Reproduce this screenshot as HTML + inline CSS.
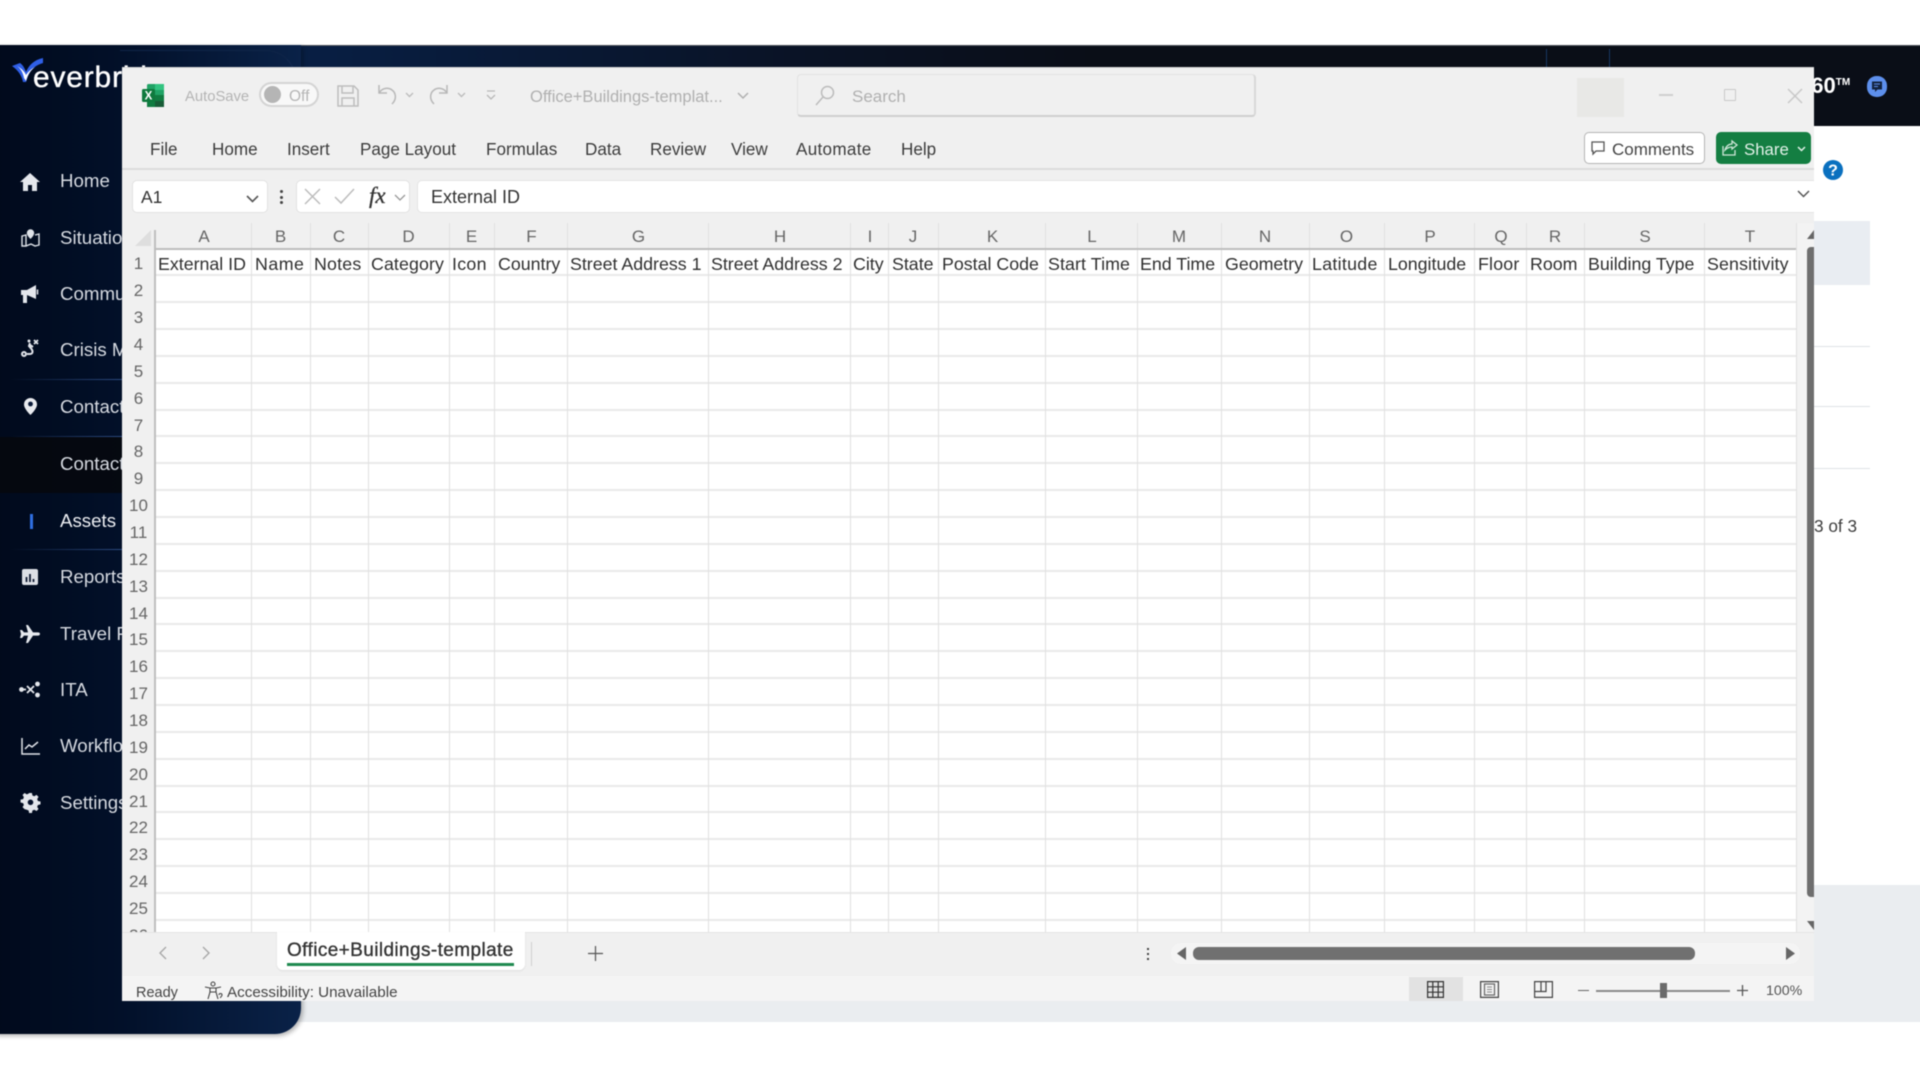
<!DOCTYPE html>
<html lang="en"><head><meta charset="utf-8"><title>Excel over Everbridge</title>
<style>
html,body{margin:0;padding:0;width:1920px;height:1080px;overflow:hidden;background:#fff}
#root{position:absolute;left:0;top:0;width:1920px;height:1080px;overflow:visible;font-family:"Liberation Sans",sans-serif;filter:blur(.45px)}
.a{position:absolute}
.t{position:absolute;white-space:nowrap;line-height:20px;height:20px}
.side{color:#d6dae1;font-size:18.7px;left:60px}
.tab{color:#3c3c3c;font-size:17.1px;top:139.5px}
.cell{color:#2f2f2f;font-size:17.8px;top:254px}
.col{position:absolute;top:226px;height:22px;line-height:22px;text-align:center;color:#666;font-size:17px}
.vl{position:absolute;top:223px;height:709px;width:1px;background:#e0e0e0}
#rows{position:absolute;left:122px;top:249.4px;width:1675px;height:682.6px;overflow:hidden}
.r{height:26.86px;box-sizing:border-box;border-bottom:2px solid #e9e9e9;width:1675px;background:#fff}
.r b{display:block;width:33px;background:#f0f0f0;height:26.86px;text-align:center;font-weight:400;color:#666;font-size:17px;line-height:29px}
svg{position:absolute;overflow:visible}
</style></head><body><div id="root">

<!-- background app -->
<div class="a" style="left:-6px;top:45px;width:1932px;height:81px;background:linear-gradient(90deg,#010a1c 0,#081f44 306px,#0a1428 766px,#0a0e17 1106px,#0a0e17 100%);border-top:1px solid #4a4f58;box-sizing:border-box"></div>
<div class="a" style="left:1546px;top:49px;width:1px;height:18px;background:#173763"></div>
<div class="a" style="left:1609px;top:49px;width:1px;height:18px;background:#173763"></div>
<div class="a" style="left:0;top:1001px;width:1926px;height:21px;background:#eaedf0"></div>
<div class="a" style="left:1814px;top:885px;width:112px;height:137px;background:#eaedf0"></div>
<div class="a" style="left:1814px;top:221px;width:56px;height:64px;background:#e9edf2"></div>
<div class="a" style="left:1814px;top:346px;width:56px;height:1px;background:#dfe2e6"></div>
<div class="a" style="left:1814px;top:406px;width:56px;height:1px;background:#dfe2e6"></div>
<div class="a" style="left:1814px;top:468px;width:56px;height:1px;background:#dfe2e6"></div>
<div class="t" style="left:1814px;top:516px;color:#3d3d3d;font-size:17.2px">3 of 3</div>
<div class="t" style="left:1799px;top:76px;color:#fff;font-weight:700;font-size:22px">360<sup style="font-size:10px;vertical-align:8px;line-height:0">TM</sup></div>
<svg style="left:1867px;top:76px" width="20" height="22" viewBox="0 0 20 22"><rect x="0" y="0" width="20" height="21" rx="9.5" fill="#5d8fec"/><path d="M5 5.5h10v8H10.5L8 16v-2.500H5z" fill="#13233f"/><path d="M7 8h6M7 10.500h4" stroke="#5d8fec" stroke-width="1"/></svg>
<svg style="left:1823px;top:160px" width="20" height="20" viewBox="0 0 20 20"><circle cx="10" cy="10" r="10" fill="#0a70bf"/><text x="10" y="15.500" text-anchor="middle" font-family="Liberation Sans" font-weight="700" font-size="16" fill="#fff">?</text></svg>

<!-- sidebar -->
<div class="a" style="left:-6px;top:45px;width:307px;height:989px;background:linear-gradient(90deg,#010a1c 0,#021029 126px,#0a2248 100%);border-bottom-right-radius:26px;box-shadow:2px 2px 5px rgba(0,0,0,.3)"></div>
<div class="a" style="left:120px;top:50px;width:175px;height:90px;border-top-right-radius:30px;border-right:1px solid #12294f;border-top:1px solid #0f2548"></div>
<div class="a" style="left:-6px;top:437px;width:307px;height:56px;background:linear-gradient(90deg,#05080f,#060a13)"></div>
<div class="a" style="left:10px;top:379px;width:112px;height:1px;background:linear-gradient(90deg,transparent,#2c4a80)"></div>
<div class="a" style="left:10px;top:436px;width:112px;height:1px;background:linear-gradient(90deg,transparent,#2c4a80)"></div>
<div class="a" style="left:10px;top:549px;width:112px;height:1px;background:linear-gradient(90deg,transparent,#2c4a80)"></div>
<div class="a" style="left:30px;top:514px;width:3px;height:15px;background:#2f6fe0"></div>

<svg style="left:12px;top:58px" width="32" height="24" viewBox="0 0 32 24"><path d="M0 8l8-3c3 2 5 6 6 9 3-7 8-12 17-14v5c-7 2-12 6-15 13l-2 6h-3C10 18 6 12 0 8z" fill="#2f5fe6"/><path d="M5 8c3 2 6 6 7 12l2 3c2-7 5-11 9-14-4 2-7 5-9 8-1-3-5-7-9-9z" fill="#fff"/></svg>
<div class="t" style="left:33px;top:60px;height:36px;line-height:36px;color:#fff;font-size:30px;letter-spacing:.8px;-webkit-text-stroke:.35px #fff">everbridge</div>

<svg style="left:20px;top:172px" width="20" height="20" viewBox="0 0 20 20"><path d="M10 1L0 10h3v9h5v-6h4v6h5v-9h3z" fill="#e4e7ec"/></svg>
<svg style="left:21px;top:229px" width="19" height="18" viewBox="0 0 19 18" fill="none" stroke="#dfe3e9" stroke-width="1.400"><path d="M1 7l4-1v11l-4 0zM5 17l5-2 4 2 4-1V5l-4 1M1 17"/><path d="M9.500 1a3 3 0 0 1 3 3c0 2-3 5-3 5s-3-3-3-5a3 3 0 0 1 3-3z" fill="#dfe3e9"/></svg>
<svg style="left:21px;top:285px" width="18" height="19" viewBox="0 0 18 19"><path d="M0 5h6L15 0v14L6 10v8H2v-8H0z" fill="#e4e7ec"/><path d="M16.500 4.500v5" stroke="#e4e7ec" stroke-width="1.500"/></svg>
<svg style="left:21px;top:339px" width="18" height="19" viewBox="0 0 18 19" fill="none" stroke="#e1e4ea" stroke-width="2"><circle cx="3" cy="15" r="2"/><path d="M6 15h3c3 0 3-3 1.500-5L8 7l1-3"/><circle cx="8" cy="2" r="1.500" fill="#e1e4ea" stroke="none"/><path d="M9 6l3 2"/><path d="M13 1l4 4M17 1l-4 4" stroke-width="1.800"/></svg>
<svg style="left:24px;top:398px" width="13" height="17" viewBox="0 0 13 17"><path d="M6.500 0a6.500 6.500 0 0 1 6.500 6.500C13 11 6.500 17 6.500 17S0 11 0 6.500A6.500 6.500 0 0 1 6.500 0z" fill="#e9ebef"/><circle cx="6.500" cy="6" r="2.400" fill="#0a1a38"/></svg>
<svg style="left:22px;top:569px" width="16" height="16" viewBox="0 0 16 16"><rect width="16" height="16" rx="2" fill="#dcdfe5"/><path d="M4.500 8v5M8 5v8M11.500 10v3" stroke="#06122a" stroke-width="1.700"/></svg>
<svg style="left:20px;top:625px" width="20" height="18" viewBox="0 0 20 18"><path d="M20 9c0-1-1-1.600-2-1.600h-5L8 0H6l2 7.400H4L2 5H0l1 4-1 4h2l2-2.400h4L6 18h2l5-7.400h5c1 0 2-.6 2-1.600z" fill="#e6e9ee"/></svg>
<svg style="left:20px;top:682px" width="20" height="15" viewBox="0 0 20 15" fill="none" stroke="#e4e7ec" stroke-width="1.800"><path d="M7 4l7 7M7 11l7-7M1 7.500h5"/><circle cx="1.500" cy="7.500" r="1.500" fill="#e4e7ec"/><circle cx="17.500" cy="2" r="1.500" fill="#e4e7ec"/><circle cx="17.500" cy="13" r="1.500" fill="#e4e7ec"/></svg>
<svg style="left:21px;top:738px" width="19" height="17" viewBox="0 0 19 17" fill="none" stroke="#dfe2e8" stroke-width="1.500"><path d="M1 0v16h18"/><path d="M4 11l4-4 3 2 6-5"/></svg>
<svg style="left:21px;top:793px" width="19" height="19" viewBox="0 0 19 19"><path d="M8 0h3l.5 2.600 2 .8L15.800 2l2.100 2.100-1.400 2.300.8 2 2.700.6v3l-2.700.6-.8 2 1.400 2.300-2.100 2.100-2.300-1.400-2 .8-.5 2.600H8l-.5-2.600-2-.8L3.200 17l-2.100-2.100 1.400-2.300-.8-2L-1 10V7l2.700-.6.800-2L1.100 2.100 3.200 0l2.300 1.400 2-.8z" fill="#e4e7ec" transform="translate(.5 0) scale(.95)"/><circle cx="9.500" cy="9.300" r="2.800" fill="#06122a"/></svg>

<div class="t side" style="top:171px">Home</div>
<div class="t side" style="top:228px">Situation Manager</div>
<div class="t side" style="top:284px">Communications</div>
<div class="t side" style="top:339.500px">Crisis Management</div>
<div class="t side" style="top:397px">Contacts</div>
<div class="t side" style="top:454px">Contacts</div>
<div class="t side" style="top:510.500px;color:#eceef2">Assets</div>
<div class="t side" style="top:567px">Reports</div>
<div class="t side" style="top:624px">Travel Risk</div>
<div class="t side" style="top:680px">ITA</div>
<div class="t side" style="top:736px">Workflows</div>
<div class="t side" style="top:792.500px">Settings</div>

<!-- Excel window -->
<div class="a" style="left:122px;top:67px;width:1692px;height:934px;background:#f0f0f0;overflow:hidden">
<div class="a" style="left:0;top:0;width:1692px;height:1px;background:#d8d8d8"></div>
</div>

<!-- Excel logo -->
<svg style="left:142px;top:84px" width="22" height="23" viewBox="0 0 22 23"><rect x="5" y="0" width="17" height="23" rx="1.500" fill="#21a366"/><rect x="13" y="0" width="9" height="6" fill="#33c481"/><rect x="5" y="11" width="17" height="6" fill="#107c41"/><rect x="13" y="17" width="9" height="6" fill="#185c37"/><rect x="5" y="17" width="8" height="6" fill="#107c41"/><rect x="0" y="5" width="13" height="13" rx="1.500" fill="#0f7a3e"/><text x="6.500" y="15.500" text-anchor="middle" font-family="Liberation Sans" font-weight="700" font-size="11.500" fill="#fff">X</text></svg>
<div class="t" style="left:185px;top:86.500px;color:#b4b4b4;font-size:14.8px">AutoSave</div>
<div class="a" style="left:259px;top:82px;width:60px;height:25px;box-sizing:border-box;border:2px solid #d4d4d4;border-radius:13px;background:#f8f8f8"></div>
<div class="a" style="left:264px;top:86px;width:17px;height:17px;border-radius:50%;background:#b5b5b5"></div>
<div class="t" style="left:289px;top:87px;color:#b5b5b5;font-size:15.5px">Off</div>
<svg style="left:337px;top:85px" width="22" height="22" viewBox="0 0 22 22" fill="none" stroke="#bdbdbd" stroke-width="1.500"><path d="M1 1h16l4 4v16H1z"/><path d="M5 1v7h11V1M5 21v-8h12v8"/></svg>
<svg style="left:377px;top:84px" width="21" height="22" viewBox="0 0 21 22" fill="none" stroke="#b8b8b8" stroke-width="1.500"><path d="M2 1v8h8"/><path d="M2 9c3-5 9-6 13-3s5 9 0 14"/></svg>
<svg style="left:405px;top:92px" width="9" height="6" viewBox="0 0 9 6" fill="none" stroke="#bdbdbd" stroke-width="1.400"><path d="M1 1l3.500 3.500L8 1"/></svg>
<svg style="left:428px;top:84px" width="21" height="22" viewBox="0 0 21 22" fill="none" stroke="#b8b8b8" stroke-width="1.500"><path d="M19 1v8h-8"/><path d="M19 9c-3-5-9-6-13-3s-5 9 0 14"/></svg>
<svg style="left:457px;top:92px" width="9" height="6" viewBox="0 0 9 6" fill="none" stroke="#bdbdbd" stroke-width="1.400"><path d="M1 1l3.500 3.500L8 1"/></svg>
<svg style="left:486px;top:90px" width="10" height="12" viewBox="0 0 10 12" fill="none" stroke="#b8b8b8" stroke-width="1.300"><path d="M1 1h8M1 5l4 4 4-4"/></svg>
<div class="t" style="left:530px;top:86.500px;color:#b0b0b0;font-size:16.5px">Office+Buildings-templat...</div>
<svg style="left:737px;top:92px" width="12" height="7" viewBox="0 0 12 7" fill="none" stroke="#b0b0b0" stroke-width="1.500"><path d="M1 1l5 5 5-5"/></svg>
<div class="a" style="left:797px;top:74px;width:459px;height:43px;box-sizing:border-box;background:#f0f0f0;border:1px solid #e2e2e2;border-bottom:2px solid #cfcfcf;border-right:2px solid #d8d8d8;border-radius:4px"></div>
<svg style="left:815px;top:85px" width="20" height="21" viewBox="0 0 20 21" fill="none" stroke="#bcbcbc" stroke-width="1.500"><circle cx="12.500" cy="7.500" r="6"/><path d="M8 12L1 20"/></svg>
<div class="t" style="left:852px;top:87px;color:#b0b0b0;font-size:17px">Search</div>
<div class="a" style="left:1577px;top:78px;width:47px;height:39px;background:#e8e8e6"></div>
<div class="a" style="left:1659px;top:94px;width:14px;height:1.500px;background:#cfcfcf"></div>
<div class="a" style="left:1724px;top:89px;width:12px;height:12px;box-sizing:border-box;border:1.500px solid #c8c8c8;border-radius:1px"></div>
<svg style="left:1788px;top:89px" width="14" height="14" viewBox="0 0 14 14" stroke="#c8c8c8" stroke-width="1.500"><path d="M0 0l14 14M14 0L0 14"/></svg>

<!-- ribbon tabs -->
<div class="t tab" style="left:150px">File</div>
<div class="t tab" style="left:212px">Home</div>
<div class="t tab" style="left:287px">Insert</div>
<div class="t tab" style="left:360px">Page Layout</div>
<div class="t tab" style="left:486px">Formulas</div>
<div class="t tab" style="left:585px">Data</div>
<div class="t tab" style="left:650px">Review</div>
<div class="t tab" style="left:731px">View</div>
<div class="t tab" style="left:796px;letter-spacing:.3px">Automate</div>
<div class="t tab" style="left:901px">Help</div>
<div class="a" style="left:1584px;top:132px;width:121px;height:32px;box-sizing:border-box;background:#fff;border:1.500px solid #b4b4b4;border-radius:5px"></div>
<svg style="left:1591px;top:141px" width="14" height="15" viewBox="0 0 14 15" fill="none" stroke="#555" stroke-width="1.300"><path d="M1 1h12v9H5l-3 3v-3H1z"/></svg>
<div class="t" style="left:1612px;top:139.500px;color:#444;font-size:17px">Comments</div>
<div class="a" style="left:1716px;top:132px;width:95px;height:32px;background:#147e42;border-radius:5px"></div>
<svg style="left:1722px;top:139px" width="16" height="17" viewBox="0 0 16 17" fill="none" stroke="#cfe6d8" stroke-width="1.300"><path d="M1 7v9h12V11M3 11c1-4 4-6 7-6V2l5 4-5 4V8c-3 0-5 1-7 3z"/></svg>
<div class="t" style="left:1744px;top:139.500px;color:#e2f1e8;font-size:16.8px">Share</div>
<svg style="left:1797px;top:146px" width="9" height="6" viewBox="0 0 9 6" fill="none" stroke="#e2f1e8" stroke-width="1.500"><path d="M1 1l3.500 3.500L8 1"/></svg>
<div class="a" style="left:122px;top:168px;width:1692px;height:2px;background:#dcdcdc"></div>

<!-- formula bar -->
<div class="a" style="left:132px;top:180px;width:136px;height:33px;box-sizing:border-box;background:#fff;border:1px solid #e2e2e2;border-radius:5px"></div>
<div class="t" style="left:141px;top:187px;color:#333;font-size:17.5px">A1</div>
<svg style="left:246px;top:195px" width="13" height="8" viewBox="0 0 13 8" fill="none" stroke="#555" stroke-width="1.600"><path d="M1 1l5.500 5.500L12 1"/></svg>
<div class="a" style="left:280px;top:190px;width:3px;height:3px;border-radius:50%;background:#444"></div>
<div class="a" style="left:280px;top:195.500px;width:3px;height:3px;border-radius:50%;background:#444"></div>
<div class="a" style="left:280px;top:201px;width:3px;height:3px;border-radius:50%;background:#444"></div>
<div class="a" style="left:296px;top:180px;width:114px;height:33px;box-sizing:border-box;background:#fff;border:1px solid #e2e2e2;border-radius:5px"></div>
<svg style="left:305px;top:189px" width="15" height="15" viewBox="0 0 15 15" stroke="#bdbdbd" stroke-width="1.500"><path d="M0 0l15 15M15 0L0 15"/></svg>
<svg style="left:334px;top:189px" width="21" height="15" viewBox="0 0 21 15" fill="none" stroke="#bdbdbd" stroke-width="1.500"><path d="M1 8l6 6L20 0"/></svg>
<div class="t" style="left:369px;top:186px;color:#333;font-family:'Liberation Serif',serif;font-style:italic;font-size:23px;-webkit-text-stroke:.3px #333">fx</div>
<svg style="left:394px;top:194px" width="12" height="7" viewBox="0 0 12 7" fill="none" stroke="#999" stroke-width="1.300"><path d="M1 1l5 5 5-5"/></svg>
<div class="a" style="left:417px;top:180px;width:1397px;height:33px;box-sizing:border-box;background:#fff;border:1px solid #e4e4e4;border-right:0;border-radius:5px 0 0 5px"></div>
<div class="t" style="left:431px;top:187px;color:#333;font-size:18px">External ID</div>
<svg style="left:1797px;top:190px" width="13" height="8" viewBox="0 0 13 8" fill="none" stroke="#555" stroke-width="1.500"><path d="M1 1l5.500 5.500L12 1"/></svg>

<!-- grid -->
<div id="rows">
<div class="r"><b>1</b></div>
<div class="r"><b>2</b></div>
<div class="r"><b>3</b></div>
<div class="r"><b>4</b></div>
<div class="r"><b>5</b></div>
<div class="r"><b>6</b></div>
<div class="r"><b>7</b></div>
<div class="r"><b>8</b></div>
<div class="r"><b>9</b></div>
<div class="r"><b>10</b></div>
<div class="r"><b>11</b></div>
<div class="r"><b>12</b></div>
<div class="r"><b>13</b></div>
<div class="r"><b>14</b></div>
<div class="r"><b>15</b></div>
<div class="r"><b>16</b></div>
<div class="r"><b>17</b></div>
<div class="r"><b>18</b></div>
<div class="r"><b>19</b></div>
<div class="r"><b>20</b></div>
<div class="r"><b>21</b></div>
<div class="r"><b>22</b></div>
<div class="r"><b>23</b></div>
<div class="r"><b>24</b></div>
<div class="r"><b>25</b></div>
<div class="r"><b>26</b></div>
</div>
<div class="vl" style="left:251px"></div><div class="vl" style="left:310px"></div><div class="vl" style="left:368px"></div><div class="vl" style="left:449px"></div><div class="vl" style="left:494px"></div><div class="vl" style="left:567px"></div><div class="vl" style="left:708px"></div><div class="vl" style="left:850px"></div><div class="vl" style="left:888px"></div><div class="vl" style="left:938px"></div><div class="vl" style="left:1045px"></div><div class="vl" style="left:1137px"></div><div class="vl" style="left:1221px"></div><div class="vl" style="left:1309px"></div><div class="vl" style="left:1384px"></div><div class="vl" style="left:1474px"></div><div class="vl" style="left:1526px"></div><div class="vl" style="left:1584px"></div><div class="vl" style="left:1704px"></div><div class="vl" style="left:1796px"></div>
<div class="a" style="left:154px;top:230px;width:2px;height:702px;background:#bfbfbf"></div>
<div class="a" style="left:155px;top:248px;width:1641px;height:2px;background:#bdbdbd"></div>
<svg style="left:135px;top:230px" width="16" height="16" viewBox="0 0 16 16"><path d="M16 0v16H0z" fill="#dedede"/></svg>

<div class="col" style="left:156px;width:96px">A</div><div class="col" style="left:251px;width:59px">B</div><div class="col" style="left:310px;width:58px">C</div><div class="col" style="left:368px;width:81px">D</div><div class="col" style="left:449px;width:45px">E</div><div class="col" style="left:495px;width:73px">F</div><div class="col" style="left:568px;width:141px">G</div><div class="col" style="left:709px;width:142px">H</div><div class="col" style="left:851px;width:38px">I</div><div class="col" style="left:888px;width:50px">J</div><div class="col" style="left:939px;width:107px">K</div><div class="col" style="left:1046px;width:92px">L</div><div class="col" style="left:1137px;width:84px">M</div><div class="col" style="left:1221px;width:88px">N</div><div class="col" style="left:1309px;width:75px">O</div><div class="col" style="left:1385px;width:90px">P</div><div class="col" style="left:1475px;width:52px">Q</div><div class="col" style="left:1526px;width:58px">R</div><div class="col" style="left:1585px;width:120px">S</div><div class="col" style="left:1704px;width:92px">T</div>

<div class="t cell" style="left:158px">External ID</div><div class="t cell" style="left:255px;letter-spacing:.5px">Name</div><div class="t cell" style="left:314px;letter-spacing:.2px">Notes</div><div class="t cell" style="left:371px;letter-spacing:.1px">Category</div><div class="t cell" style="left:452px;letter-spacing:.3px">Icon</div><div class="t cell" style="left:498px">Country</div><div class="t cell" style="left:570px">Street Address 1</div><div class="t cell" style="left:711px">Street Address 2</div><div class="t cell" style="left:853px">City</div><div class="t cell" style="left:892px">State</div><div class="t cell" style="left:942px">Postal Code</div><div class="t cell" style="left:1048px;letter-spacing:.1px">Start Time</div><div class="t cell" style="left:1140px">End Time</div><div class="t cell" style="left:1225px">Geometry</div><div class="t cell" style="left:1312px;letter-spacing:.3px">Latitude</div><div class="t cell" style="left:1388px">Longitude</div><div class="t cell" style="left:1478px;letter-spacing:.2px">Floor</div><div class="t cell" style="left:1530px">Room</div><div class="t cell" style="left:1588px">Building Type</div><div class="t cell" style="left:1707px;letter-spacing:.15px">Sensitivity</div>

<!-- vertical scrollbar -->
<div class="a" style="left:1797px;top:223px;width:17px;height:709px;background:#f3f3f3"></div>
<svg style="left:1807px;top:230px" width="7" height="9" viewBox="0 0 7 9"><path d="M7 0v9H0z" fill="#666"/></svg>
<div class="a" style="left:1807px;top:247px;width:7px;height:650px;background:#6e6e6e;border-radius:4px 0 0 4px"></div>
<svg style="left:1807px;top:921px" width="7" height="9" viewBox="0 0 7 9"><path d="M0 0h7v9z" fill="#666"/></svg>

<!-- sheet tabs -->
<div class="a" style="left:122px;top:932px;width:1692px;height:44px;background:#f0f0f0"></div>
<div class="a" style="left:122px;top:932px;width:1692px;height:1px;background:#e4e4e4"></div>
<svg style="left:158px;top:946px" width="9" height="14" viewBox="0 0 9 14" fill="none" stroke="#a8a8a8" stroke-width="1.400"><path d="M8 1L2 7l6 6"/></svg>
<svg style="left:202px;top:946px" width="9" height="14" viewBox="0 0 9 14" fill="none" stroke="#a8a8a8" stroke-width="1.400"><path d="M1 1l6 6-6 6"/></svg>
<div class="a" style="left:277px;top:932px;width:248px;height:38px;background:#fff;border-radius:0 0 6px 6px;box-shadow:0 1px 2px rgba(0,0,0,.08)"></div>
<div class="t" style="left:287px;top:941px;color:#333;font-size:19px;letter-spacing:.4px;-webkit-text-stroke:.35px #333">Office+Buildings-template</div>
<div class="a" style="left:287px;top:963px;width:227px;height:3px;background:#1f8a50"></div>
<div class="a" style="left:531px;top:942px;width:1px;height:24px;background:#cfcfcf"></div>
<svg style="left:588px;top:946px" width="15" height="15" viewBox="0 0 15 15" stroke="#555" stroke-width="1.200"><path d="M7.500 0v15M0 7.500h15"/></svg>
<div class="a" style="left:1147px;top:948px;width:2px;height:2px;background:#444"></div>
<div class="a" style="left:1147px;top:953px;width:2px;height:2px;background:#444"></div>
<div class="a" style="left:1147px;top:958px;width:2px;height:2px;background:#444"></div>
<div class="a" style="left:1171px;top:943px;width:629px;height:21px;background:#f4f4f4;border-radius:10px"></div>
<svg style="left:1177px;top:947px" width="9" height="13" viewBox="0 0 9 13"><path d="M9 0v13L0 6.500z" fill="#666"/></svg>
<div class="a" style="left:1193px;top:947px;width:502px;height:13px;background:#707070;border-radius:6px"></div>
<svg style="left:1786px;top:947px" width="9" height="13" viewBox="0 0 9 13"><path d="M0 0v13l9-6.500z" fill="#666"/></svg>

<!-- status bar -->
<div class="a" style="left:122px;top:976px;width:1692px;height:25px;background:#f4f4f4"></div>
<div class="t" style="left:136px;top:982.500px;color:#444;font-size:14.5px">Ready</div>
<svg style="left:204px;top:981px" width="19" height="19" viewBox="0 0 19 19" fill="none" stroke="#444" stroke-width="1.100"><circle cx="9" cy="3" r="2"/><path d="M1 6l5 1h6l5-1M6 7v4l-2 7M12 7v4l2 7M6 11h6"/><path d="M15 14c0-2 3-2 3 0s-2 1.500-1.500 3"/></svg>
<div class="t" style="left:227px;top:982.500px;color:#444;font-size:15.2px">Accessibility: Unavailable</div>
<div class="a" style="left:1409px;top:977px;width:54px;height:24px;background:#e2e2e2"></div>
<svg style="left:1427px;top:981px" width="17" height="17" viewBox="0 0 17 17" fill="none" stroke="#333" stroke-width="1.200"><path d="M.6.600h15.800v15.800H.6zM.6 5.800h15.800M.6 11.200h15.800M5.800.6v15.800M11.200.6v15.800"/></svg>
<svg style="left:1480px;top:981px" width="19" height="17" viewBox="0 0 19 17" fill="none" stroke="#444" stroke-width="1.200"><path d="M.6.600h17.800v15.800H.6z"/><rect x="4.500" y="3" width="10" height="11" stroke="#666"/><path d="M7 6h5M7 8.500h5M7 11h5" stroke="#888" stroke-width=".9"/></svg>
<svg style="left:1534px;top:981px" width="19" height="17" viewBox="0 0 19 17" fill="none" stroke="#444" stroke-width="1.200"><path d="M.6.600h17.800v15.800H.6zM.6 10.500h6.400V.6M7 10.500h5V.6"/></svg>
<div class="a" style="left:1578px;top:989.500px;width:11px;height:1.800px;background:#666"></div>
<div class="a" style="left:1596px;top:990px;width:134px;height:1.500px;background:#8a8a8a"></div>
<div class="a" style="left:1660px;top:983px;width:7px;height:15px;background:#6a6a6a"></div>
<svg style="left:1737px;top:985px" width="11" height="11" viewBox="0 0 11 11" stroke="#555" stroke-width="1.300"><path d="M5.500 0v11M0 5.500h11"/></svg>
<div class="t" style="left:1766px;top:981px;color:#555;font-size:14.2px">100%</div>

</div></body></html>
